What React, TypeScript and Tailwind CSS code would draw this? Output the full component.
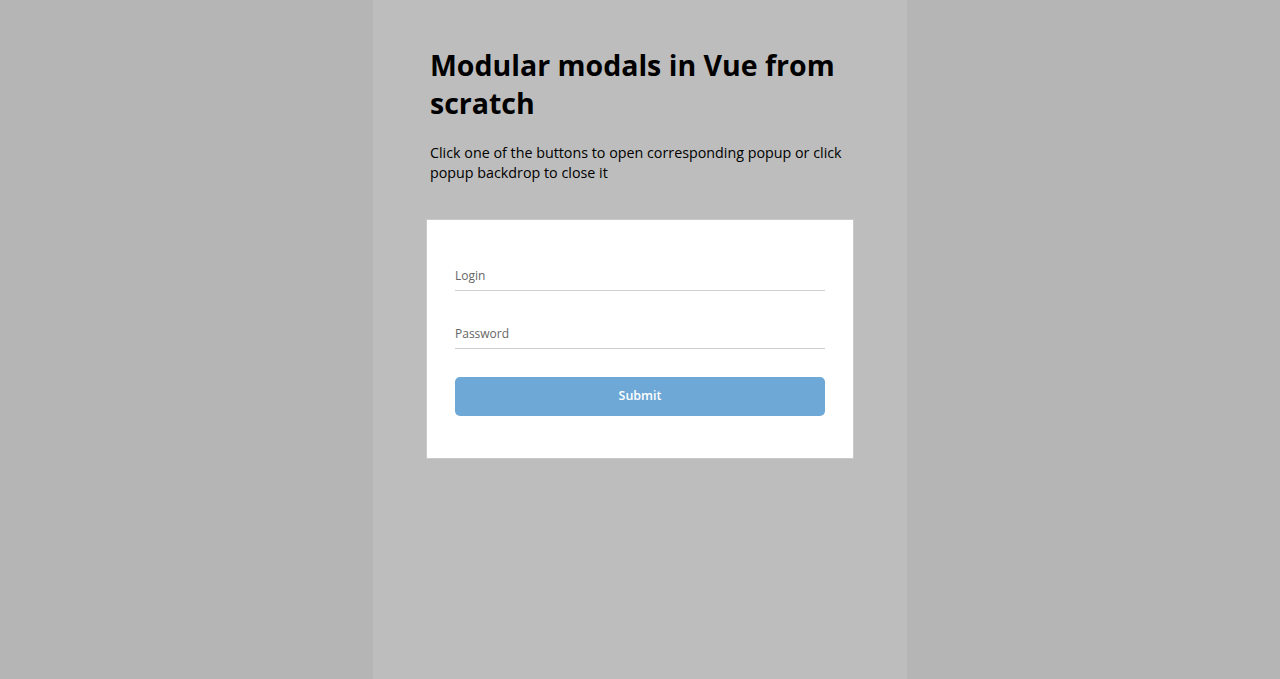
import React from 'react';

const Field: React.FC<{ placeholder: string; type?: string; className?: string }> = ({ placeholder, type = 'text', className = '' }) => (
    <input
        type={type}
        placeholder={placeholder}
        className={`block w-full h-[38px] pt-2 border-b border-[#cfcfcf] bg-transparent text-[12px] text-[#555] placeholder:text-[#666] outline-none ${className}`}
    />
);

export default function App() {
    return (
        <div className="min-h-screen w-full bg-[#b5b5b5] font-['Open_Sans',sans-serif]">
            <div className="mx-auto w-[534px] min-h-screen bg-[#bdbdbd] pt-[46px]">
                <div className="pl-[57px] pr-[50px]">
                    <h1 className="text-[28.5px] leading-[38px] font-bold text-black">Modular modals in Vue from scratch</h1>
                    <p className="mt-[21px] text-[14.3px] leading-5 text-black">
                        Click one of the buttons to open corresponding popup or click popup backdrop to close it
                    </p>
                </div>

                <div className="mt-[36px] ml-[53px] w-[428px] bg-white border border-[#c9c9c9] px-[28px] pt-[33px] pb-[42px]">
                    <Field placeholder="Login" />
                    <Field placeholder="Password" type="password" className="mt-5" />
                    <button className="mt-7 w-full h-[39px] rounded-[5px] bg-[#6ea8d6] text-white text-[12.5px] font-semibold">
                        Submit
                    </button>
                </div>
            </div>
        </div>
    );
}
